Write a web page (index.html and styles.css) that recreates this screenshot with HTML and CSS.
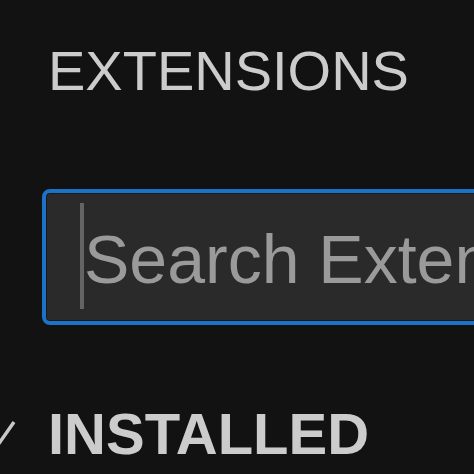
FILE: index.html
```html
<!DOCTYPE html>
<html lang="en">
<head>
    <meta charset="UTF-8">
    <meta name="viewport" content="width=device-width, initial-scale=1.0">
    <title>Extensions</title>
    <link rel="stylesheet" href="styles.css">
</head>
<body>
    <div class="sidebar">
        <h1 class="title">EXTENSIONS</h1>
        <div class="search">
            <span class="caret"></span>
            <span class="placeholder">Search Extensions</span>
        </div>
        <div class="section">
            <svg class="chevron" width="32" height="32" viewBox="0 0 32 32">
                <path d="M2 8 L16 24 L30 4" fill="none" stroke="#c8c8c8" stroke-width="3.5"/>
            </svg>
            <span class="section-title">INSTALLED</span>
        </div>
    </div>
</body>
</html>
```

FILE: styles.css
```css
body {
    margin: 0;
    background-color: #121212;
    font-family: "Liberation Sans", Arial, sans-serif;
    overflow: hidden;
}
.sidebar {
    display: flex;
    flex-direction: column;
    padding-left: 48px;
    height: 474px;
}
.title {
    margin: 43px 0 0 0;
    font-size: 56px;
    font-weight: normal;
    line-height: 1;
    color: #cccccc;
}
.search {
    display: flex;
    align-items: flex-start;
    margin: 90px 0 0 -6px;
    width: 520px;
    height: 128px;
    border: 4px solid #1c71c8;
    border-radius: 8px;
    background-color: #2a2a2a;
    box-shadow: inset 0 0 0 1px #1a1a1a;
    padding-left: 34px;
    box-sizing: content-box;
    white-space: nowrap;
    overflow: hidden;
}
.caret {
    flex: none;
    width: 4px;
    height: 106px;
    margin-top: 10px;
    background-color: #646464;
}
.placeholder {
    font-size: 68px;
    line-height: 1;
    margin-top: 32px;
    color: #9a9a9a;
}
.section {
    display: flex;
    align-items: center;
    gap: 32px;
    margin: 80px 0 0 -64px;
}
.chevron {
    flex: none;
}
.section-title {
    font-size: 58px;
    font-weight: bold;
    line-height: 1;
    color: #cccccc;
}
```
